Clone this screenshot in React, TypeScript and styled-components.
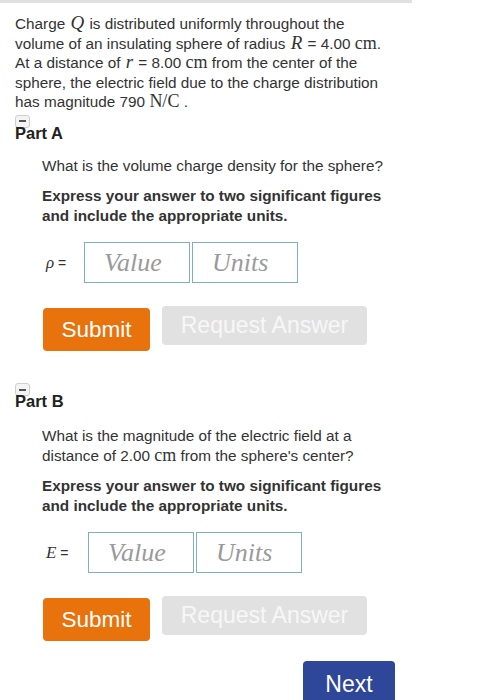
import styled, { createGlobalStyle } from "styled-components";

const Global = createGlobalStyle`
  html, body {
    margin: 0;
    padding: 0;
    background: #ffffff;
  }
  body {
    font-family: "Liberation Sans", Arial, sans-serif;
    color: #333333;
  }
`;

const Page = styled.div`
  width: 496px;
  height: 700px;
  overflow: hidden;
`;

const TopRule = styled.div`
  width: 412px;
  height: 3px;
  background: #e0e0e0;
`;

const Intro = styled.p`
  margin: 11px 0 0 15px;
  width: 440px;
  font-size: 15.3px;
  line-height: 19.5px;
`;

const MathVar = styled.span`
  font-family: "Liberation Serif", "Times New Roman", serif;
  font-style: italic;
  font-size: 19px;
  line-height: 0;
  padding: 0 1px;
`;

const MathUnit = styled.span`
  font-family: "Liberation Serif", "Times New Roman", serif;
  font-size: 18px;
  line-height: 0;
`;

const PartHeader = styled.div<{ $top: number }>`
  position: relative;
  margin: ${(p) => p.$top}px 0 0 15px;
  height: 22px;
`;

const Toggle = styled.span`
  position: absolute;
  left: 0;
  top: -7px;
  width: 15px;
  height: 13px;
  box-sizing: border-box;
  border: 1px solid #cfcfcf;
  border-radius: 3px;
  background: #f4f4f4;
  display: flex;
  align-items: center;
  justify-content: center;
  &::after {
    content: "";
    width: 7px;
    height: 2px;
    background: #555555;
  }
`;

const PartTitle = styled.h3`
  position: relative;
  margin: 0;
  font-size: 16.5px;
  line-height: 22px;
  font-weight: bold;
  color: #222222;
`;

const Section = styled.div`
  margin-left: 42px;
`;

const Question = styled.p<{ $top: number }>`
  margin: ${(p) => p.$top}px 0 0 0;
  width: 345px;
  font-size: 15.3px;
  line-height: 19.5px;
`;

const Instruction = styled.p`
  margin: 11px 0 0 0;
  width: 360px;
  font-size: 15.3px;
  line-height: 19.5px;
  font-weight: bold;
  color: #333333;
`;

const AnswerRow = styled.div`
  display: flex;
  align-items: center;
  margin-top: 17px;
  height: 41px;
`;

const Label = styled.span<{ $width: number }>`
  width: ${(p) => p.$width}px;
  padding-left: 4px;
  box-sizing: border-box;
  font-size: 14px;
  color: #333333;
`;

const LabelSymbol = styled.span<{ $italic?: boolean }>`
  font-family: "Liberation Serif", "Times New Roman", serif;
  font-style: ${(p) => (p.$italic ? "italic" : "normal")};
  font-size: 17px;
`;

const Field = styled.div`
  width: 106px;
  height: 41px;
  box-sizing: border-box;
  border: 1.5px solid #7eb0c0;
  margin-right: 2px;
  display: flex;
  align-items: center;
  padding-left: 19px;
  font-family: "Liberation Serif", "Times New Roman", serif;
  font-style: italic;
  font-size: 26px;
  color: #9a9a9a;
`;

const ButtonRow = styled.div`
  display: flex;
  align-items: flex-start;
  gap: 12px;
  margin: 23px 0 0 1px;
`;

const SubmitButton = styled.button`
  width: 107px;
  height: 43px;
  margin-top: 2px;
  border: none;
  border-radius: 4px;
  background: #e8720c;
  color: #ffffff;
  font-family: "Liberation Sans", Arial, sans-serif;
  font-size: 22.5px;
  padding: 0;
`;

const RequestButton = styled.button`
  width: 205px;
  height: 39px;
  border: none;
  border-radius: 4px;
  background: #e1e1e1;
  color: #f7f7f7;
  font-family: "Liberation Sans", Arial, sans-serif;
  font-size: 23px;
  padding: 0;
`;

const Footer = styled.div`
  display: flex;
  justify-content: flex-end;
  width: 395px;
  margin-top: 20px;
`;

const NextButton = styled.button`
  width: 92px;
  height: 42px;
  border: none;
  border-radius: 4px 4px 0 0;
  background: #2f4799;
  color: #ffffff;
  font-family: "Liberation Sans", Arial, sans-serif;
  font-size: 23px;
  padding: 4px 0 0 0;
`;

interface AnswerProps {
  symbol: string;
  italic?: boolean;
  labelWidth: number;
}

const Answer = ({ symbol, italic, labelWidth }: AnswerProps) => (
  <>
    <AnswerRow>
      <Label $width={labelWidth}>
        <LabelSymbol $italic={italic}>{symbol}</LabelSymbol> =
      </Label>
      <Field>Value</Field>
      <Field>Units</Field>
    </AnswerRow>
    <ButtonRow>
      <SubmitButton>Submit</SubmitButton>
      <RequestButton>Request Answer</RequestButton>
    </ButtonRow>
  </>
);

export default function App() {
  return (
    <Page>
      <Global />
      <TopRule />
      <Intro>
        Charge <MathVar>Q</MathVar> is distributed uniformly throughout the
        <br />
        volume of an insulating sphere of radius <MathVar>R</MathVar> = 4.00{" "}
        <MathUnit>cm</MathUnit>.
        <br />
        At a distance of <MathVar>r</MathVar> = 8.00 <MathUnit>cm</MathUnit>{" "}
        from the center of the
        <br />
        sphere, the electric field due to the charge distribution
        <br />
        has magnitude 790 <MathUnit>N/C</MathUnit> .
      </Intro>

      <PartHeader $top={10}>
        <Toggle />
        <PartTitle>Part A</PartTitle>
      </PartHeader>
      <Section>
        <Question $top={12}>
          What is the volume charge density for the sphere?
        </Question>
        <Instruction>
          Express your answer to two significant figures and include the
          appropriate units.
        </Instruction>
        <Answer symbol="ρ" italic labelWidth={42} />
      </Section>

      <PartHeader $top={39}>
        <Toggle />
        <PartTitle>Part B</PartTitle>
      </PartHeader>
      <Section>
        <Question $top={14}>
          What is the magnitude of the electric field at a distance of 2.00{" "}
          <MathUnit>cm</MathUnit> from the sphere's center?
        </Question>
        <Instruction>
          Express your answer to two significant figures and include the
          appropriate units.
        </Instruction>
        <Answer symbol="E" italic labelWidth={46} />
      </Section>

      <Footer>
        <NextButton>Next</NextButton>
      </Footer>
    </Page>
  );
}
